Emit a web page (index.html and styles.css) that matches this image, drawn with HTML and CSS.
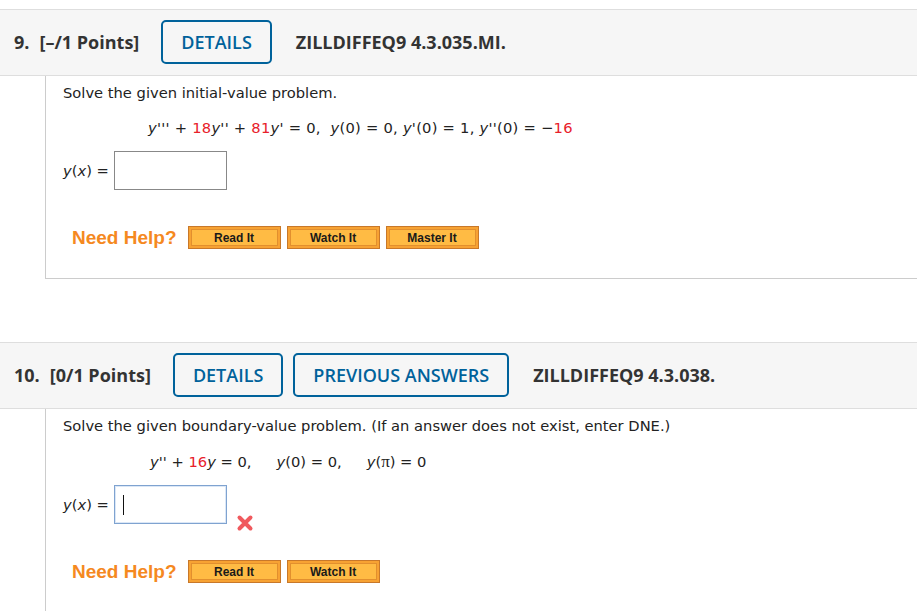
FILE: index.html
```html
<!DOCTYPE html>
<html lang="en">
<head>
  <meta charset="UTF-8">
  <title>Assignment — Questions 9 and 10</title>
  <meta name="viewport" content="width=device-width, initial-scale=1">
  <link rel="stylesheet" href="styles.css">
</head>
<body>

<div class="question">
  <div class="q-head">
    <span class="q-num">9.</span>
    <span class="q-points">[–/1 Points]</span>
    <button class="q-btn" type="button">DETAILS</button>
    <span class="q-code">ZILLDIFFEQ9 4.3.035.MI.</span>
  </div>
  <div class="q-body">
    <p class="prompt">Solve the given initial-value problem.</p>
    <p class="eq eq-1"><i>y'''</i> + <span class="red">18</span><i>y''</i> + <span class="red">81</span><i>y'</i> = 0,&nbsp; <i>y</i>(0) = 0, <i>y'</i>(0) = 1, <i>y''</i>(0) = −<span class="red">16</span></p>
    <div class="answer-row">
      <label class="answer-label" for="a9"><i>y</i>(<i>x</i>) =</label>
      <input class="answer" id="a9" type="text">
    </div>
    <div class="help">
      <span class="help-title">Need Help?</span>
      <button class="help-btn" type="button">Read It</button>
      <button class="help-btn" type="button">Watch It</button>
      <button class="help-btn" type="button">Master It</button>
    </div>
  </div>
</div>

<div class="question">
  <div class="q-head">
    <span class="q-num">10.</span>
    <span class="q-points">[0/1 Points]</span>
    <button class="q-btn" type="button">DETAILS</button>
    <button class="q-btn" type="button">PREVIOUS ANSWERS</button>
    <span class="q-code">ZILLDIFFEQ9 4.3.038.</span>
  </div>
  <div class="q-body open">
    <p class="prompt">Solve the given boundary-value problem. (If an answer does not exist, enter DNE.)</p>
    <p class="eq eq-2"><i>y''</i> + <span class="red">16</span><i>y</i> = 0,<span class="gap"></span><i>y</i>(0) = 0,<span class="gap"></span><i>y</i>(<span class="pi">π</span>) = 0</p>
    <div class="answer-row">
      <span class="answer-label"><i>y</i>(<i>x</i>) =</span>
      <span class="answer focused"><span class="caret"></span></span>
      <svg class="wrong" width="18" height="18" viewBox="0 0 18 18" aria-label="incorrect">
        <path d="M3.5 3.5 L14.5 14.5 M14.5 3.5 L3.5 14.5" stroke="#f05a5e" stroke-width="4" stroke-linecap="round"/>
      </svg>
    </div>
    <div class="help">
      <span class="help-title">Need Help?</span>
      <button class="help-btn" type="button">Read It</button>
      <button class="help-btn" type="button">Watch It</button>
    </div>
  </div>
</div>

</body>
</html>
```
FILE: styles.css
```css
body {
  margin: 0;
  padding-top: 9px;
  background-color: #fff;
  color: #222;
  font-family: "DejaVu Sans", Verdana, sans-serif;
  font-size: 14.7px;
  overflow: hidden;
}

p {
  margin: 0;
}

/* Question header bar */

.question + .question {
  margin-top: 63px;
}

.q-head {
  display: flex;
  align-items: center;
  padding: 10px 0 11px 14px;
  background-color: #f6f6f6;
  border-top: 1px solid #dedede;
  border-bottom: 1px solid #dedede;
  font-family: "Open Sans", sans-serif;
  font-weight: 700;
  font-size: 18px;
  color: #333;
}

.q-num {
  margin-right: 10px;
}

.q-btn {
  height: 44px;
  margin-left: 22px;
  padding: 0 18px;
  border: 2px solid #00629b;
  border-radius: 5px;
  background-color: #f6f6f6;
  color: #00629b;
  font-family: "Open Sans", sans-serif;
  font-weight: 600;
  font-size: 18px;
}

.q-btn + .q-btn {
  margin-left: 10px;
}

.q-code {
  margin-left: 24px;
}

/* Question body */

.q-body {
  margin-left: 45px;
  padding: 8px 0 29px 17px;
  border-left: 1px solid #cccccc;
  border-bottom: 1px solid #cccccc;
}

.q-body.open {
  border-bottom: 0;
}

.eq {
  margin-top: 18px;
  padding-left: 85px;
}

.eq-1 {
  letter-spacing: 0.25px;
}

.eq-2 {
  padding-left: 87px;
}

.eq .gap {
  display: inline-block;
  width: 25px;
}

.eq .pi {
  font-family: "Liberation Serif", serif;
  font-size: 17px;
}

.red {
  color: #e8202a;
}

.answer-row {
  display: flex;
  align-items: center;
  margin-top: 15px;
}

.open .answer-row {
  margin-top: 13px;
}

.answer-label {
  margin-right: 5px;
}

.answer {
  box-sizing: border-box;
  width: 113px;
  height: 39px;
  margin: 0;
  padding: 0 8px;
  border: 1px solid #888;
  background: #fff;
  font: inherit;
}

.answer.focused {
  display: flex;
  align-items: center;
  border-color: #7fa3d0;
  box-shadow: inset 0 0 0 1px #dbe7f6;
}

.caret {
  width: 1px;
  height: 20px;
  background-color: #111;
}

.wrong {
  align-self: flex-end;
  margin: 0 0 -8px 9px;
}

/* Help buttons */

.help {
  display: flex;
  align-items: center;
  margin-top: 36px;
  padding-left: 9px;
}

.help-title {
  margin-right: 11px;
  font-family: "Liberation Sans", Arial, sans-serif;
  font-weight: 700;
  font-size: 19px;
  color: #f5891f;
}

.help-btn {
  width: 93px;
  height: 23px;
  margin-right: 6px;
  padding: 0;
  border: 1px solid #c8782a;
  background-color: #ffbb44;
  box-shadow: inset 0 0 0 2px #f7a233, inset 0 0 0 3px #e28f2e;
  font-family: "Liberation Sans", Arial, sans-serif;
  font-weight: 700;
  font-size: 12px;
  color: #1a1a1a;
}
```
